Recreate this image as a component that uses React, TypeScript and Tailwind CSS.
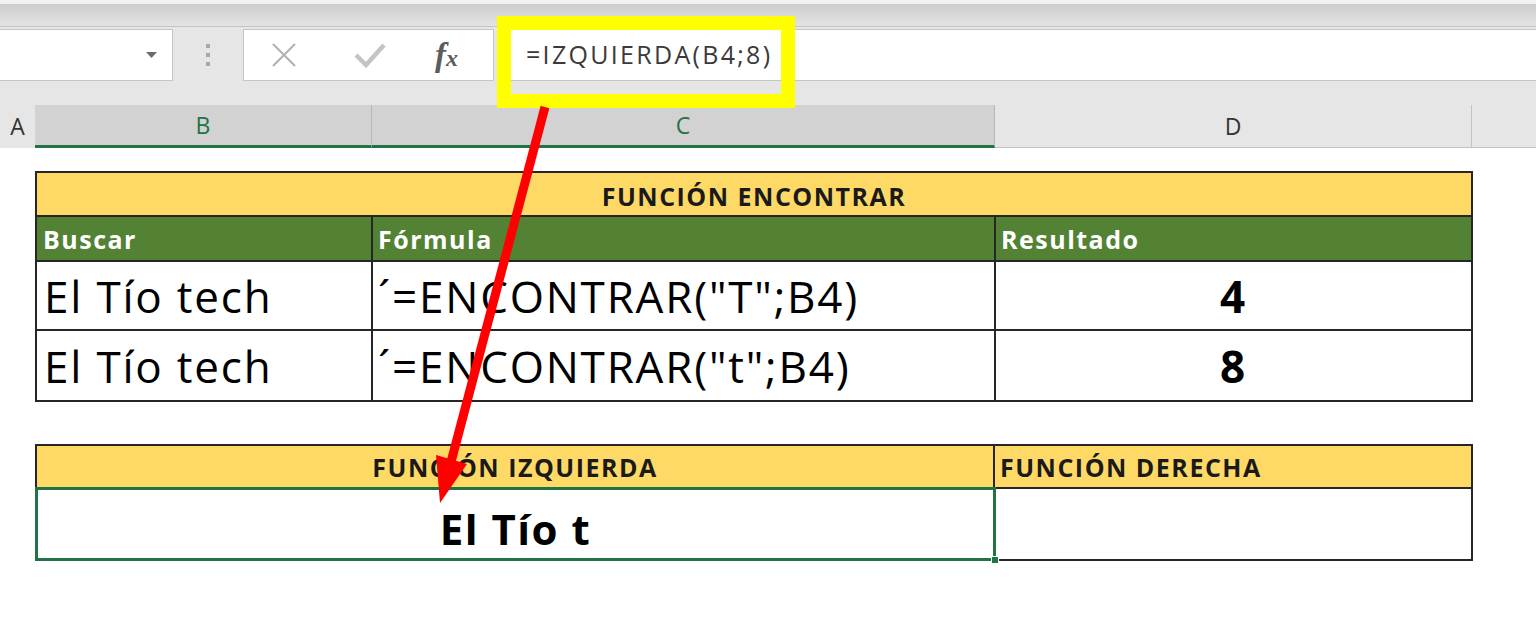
import React from 'react';

const cellFont = { fontFamily: '"Open Sans", "Noto Sans", sans-serif' };
const uiFont = { fontFamily: '"Open Sans", "Noto Sans", sans-serif' };

/** Name box + buttons + formula input row of the Excel ribbon. */
function FormulaBar() {
  return (
    <div className="relative flex h-[78px] items-start bg-[#e6e6e6] pt-[2px]">
      <div className="flex h-[52px] w-[173px] items-center justify-end border border-[#c6c6c6] border-l-0 bg-white pr-[15px]">
        <svg width="11" height="6" viewBox="0 0 11 6">
          <polygon points="0,0 11,0 5.5,6" fill="#6b6b6b" />
        </svg>
      </div>
      <div className="flex h-[52px] w-[70px] flex-col items-center justify-center gap-[5px]">
        <span className="h-[4px] w-[4px] bg-[#a8a8a8]" />
        <span className="h-[4px] w-[4px] bg-[#a8a8a8]" />
        <span className="h-[4px] w-[4px] bg-[#a8a8a8]" />
      </div>
      <div className="flex h-[52px] w-[251px] items-center border border-[#c6c6c6] bg-white">
        <svg className="ml-[27px]" width="26" height="26" viewBox="0 0 26 26">
          <path d="M2 2 L24 24 M24 2 L2 24" stroke="#b0b0b0" strokeWidth="2" fill="none" />
        </svg>
        <svg className="ml-[57px]" width="32" height="26" viewBox="0 0 32 26">
          <path d="M2 13 L12 23 L30 3" stroke="#c4c4c4" strokeWidth="4.5" fill="none" />
        </svg>
        <span
          className="ml-[49px] text-[33px] font-bold italic leading-none text-[#5c5c5c]"
          style={{ fontFamily: '"Liberation Serif", serif' }}
        >
          f<span className="text-[24px]">x</span>
        </span>
      </div>
      <div className="ml-[3px] flex h-[52px] flex-1 items-center border-y border-[#c6c6c6] bg-white">
        <div className="relative flex h-full items-center">
          <div className="absolute left-0 top-[-14px] h-[92px] w-[298px] border-[14px] border-[#ffff00]" />
          <span className="pl-[29px] text-[25px] tracking-[2.3px] text-[#3a3a3a]" style={uiFont}>
            =IZQUIERDA(B4;8)
          </span>
        </div>
      </div>
    </div>
  );
}

function ColumnHeaders() {
  return (
    <div className="flex h-[43px] bg-[#e6e6e6] text-[23px]" style={uiFont}>
      <div className="flex w-[35px] items-center justify-center text-[#333]">A</div>
      <div className="flex w-[337px] items-center justify-center border-b-[3px] border-r border-r-[#b8b8b8] border-b-[#217346] bg-[#d2d2d2] text-[#217346]">
        B
      </div>
      <div className="flex w-[623px] items-center justify-center border-b-[3px] border-r border-r-[#b8b8b8] border-b-[#217346] bg-[#d2d2d2] text-[#217346]">
        C
      </div>
      <div className="flex w-[477px] items-center justify-center border-b border-r border-[#c2c2c2] text-[#333]">
        D
      </div>
      <div className="flex-1 border-b border-[#c2c2c2]" />
    </div>
  );
}

const rows = [
  { buscar: 'El Tío tech', formula: '´=ENCONTRAR("T";B4)', result: '4' },
  { buscar: 'El Tío tech', formula: '´=ENCONTRAR("t";B4)', result: '8' },
];

function EncontrarTable() {
  return (
    <div className="ml-[35px] mt-[23px] w-[1438px] border-2 border-[#262626]" style={cellFont}>
      <div className="flex h-[44px] items-center justify-center border-b-2 border-[#262626] bg-[#ffd966] pt-[5px] text-[25px] font-bold tracking-[1.5px] text-[#1a1a1a]">
        FUNCIÓN ENCONTRAR
      </div>
      <div className="flex h-[45px] border-b-2 border-[#262626] bg-[#548235] text-[25px] font-bold tracking-[1.5px] text-white">
        <div className="flex w-[336px] items-center border-r-2 border-[#262626] pl-[6px] pt-[3px]">Buscar</div>
        <div className="flex w-[623px] items-center border-r-2 border-[#262626] pl-[5px] pt-[3px]">Fórmula</div>
        <div className="flex flex-1 items-center pl-[5px] pt-[3px]">Resultado</div>
      </div>
      {rows.map((r, i) => (
        <div
          key={r.formula}
          className={`flex h-[69px] text-[44px] tracking-[1.8px] text-black ${i === 0 ? 'border-b-2 border-[#262626]' : ''}`}
        >
          <div className="flex w-[336px] items-center border-r-2 border-[#262626] pl-[7px]">{r.buscar}</div>
          <div className="flex w-[623px] items-center border-r-2 border-[#262626] pl-[5px]">{r.formula}</div>
          <div className="flex flex-1 items-center justify-center font-bold">{r.result}</div>
        </div>
      ))}
    </div>
  );
}

function IzquierdaTable() {
  return (
    <div className="ml-[35px] mt-[42px] w-[1438px]" style={cellFont}>
      <div className="flex h-[43px] border-2 border-b-0 border-[#262626] bg-[#ffd966] text-[25px] font-bold tracking-[1.5px] text-[#1a1a1a]">
        <div className="flex w-[958px] items-center justify-center border-r-2 border-[#262626] pt-[3px]">FUNCIÓN IZQUIERDA</div>
        <div className="flex flex-1 items-center pl-[5px] pt-[3px]">FUNCIÓN DERECHA</div>
      </div>
      <div className="flex h-[74px]">
        <div className="relative flex w-[961px] items-center justify-center border-[3px] border-[#217346] pt-[8px] text-[42px] font-bold tracking-[1.5px] text-black">
          El Tío t
          <span className="absolute bottom-[-6px] right-[-6px] h-[8px] w-[8px] border border-white bg-[#217346]" />
        </div>
        <div className="flex-1 border-2 border-l-0 border-[#262626]" />
      </div>
    </div>
  );
}

export default function App() {
  return (
    <div className="relative h-[619px] w-[1536px] overflow-hidden bg-white">
      <div className="h-[4px] bg-[#f4f1f0]" />
      <div className="h-[23px] border-b border-[#c4c4c4] bg-gradient-to-b from-[#cdcdcd] to-[#e4e4e4]" />
      <FormulaBar />
      <ColumnHeaders />
      <EncontrarTable />
      <IzquierdaTable />
      <svg className="pointer-events-none absolute left-0 top-0" width="1536" height="619">
        <line x1="545" y1="107" x2="451" y2="462" stroke="#ff0000" strokeWidth="9" />
        <polygon points="440,503 467,464 436,455" fill="#ff0000" />
      </svg>
    </div>
  );
}
